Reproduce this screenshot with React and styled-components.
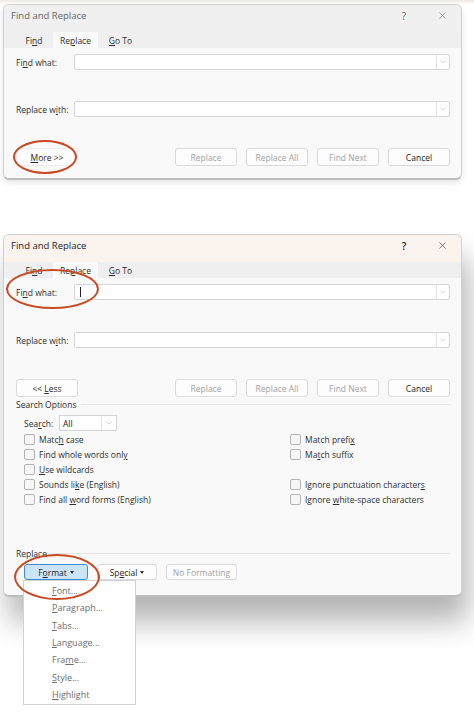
import React from "react";
import styled, { createGlobalStyle } from "styled-components";
import { ChevronDown, X } from "lucide-react";

const GlobalStyle = createGlobalStyle`
  html, body {
    margin: 0;
    padding: 0;
    background: #fff;
  }
  body {
    font-family: "Open Sans", "Noto Sans", sans-serif;
    color: #333;
  }
`;

const Page = styled.div`
  width: 474px;
  height: 721px;
  overflow: hidden;
  box-sizing: border-box;
  padding: 4px 0 0 3px;
  display: flex;
  flex-direction: column;
  gap: 54px;
  background: linear-gradient(#ebe7e3 0, #fff 4px);
`;

const Dialog = styled.div`
  position: relative;
  width: 459px;
  box-sizing: border-box;
  border: 1px solid #d0d0d0;
  border-bottom: 2px solid #bcbcbc;
  border-radius: 6px;
  background: #f9f9f9;
  display: flex;
  flex-direction: column;
  box-shadow: ${({ $active }) =>
    $active ? "6px 24px 30px rgba(0, 0, 0, 0.3)" : "0 3px 6px rgba(0, 0, 0, 0.1)"};
`;

const TitleBar = styled.div`
  height: 27px;
  display: flex;
  align-items: center;
  padding: 0 0 6px 7px;
  box-sizing: border-box;
  border-radius: 6px 6px 0 0;
  background: ${({ $active }) => ($active ? "#fbf3ee" : "#f0f0f0")};
  color: ${({ $active }) => ($active ? "#1e1e1e" : "#666")};
  font-size: 9.5px;
`;

const TitleText = styled.div`
  flex: 1;
`;

const TitleButton = styled.div`
  width: 38px;
  display: flex;
  justify-content: center;
  align-items: center;
  font-size: 10px;
  font-weight: ${({ $bold }) => ($bold ? 600 : 400)};
`;

const TabStrip = styled.div`
  height: 16px;
  display: flex;
  padding-left: 11px;
  background: #efefef;
`;

const Tab = styled.div`
  width: ${({ $w }) => $w}px;
  display: flex;
  align-items: center;
  justify-content: center;
  font-size: 8.5px;
  color: #2e2e2e;
  background: ${({ $selected }) => ($selected ? "#fafafa" : "transparent")};
`;

const Body = styled.div`
  display: flex;
  flex-direction: column;
  padding: 6px 11px ${({ $pb }) => $pb}px 12px;
`;

const Key = styled.span`
  text-decoration: underline;
  text-underline-offset: 1px;
`;

const FieldRow = styled.div`
  display: flex;
  align-items: center;
  height: 16px;
  margin-top: ${({ $mt }) => $mt || 0}px;
`;

const Label = styled.div`
  position: relative;
  width: ${({ $w }) => $w}px;
  flex-shrink: 0;
  font-size: 8.5px;
  color: #2e2e2e;
  white-space: nowrap;
`;

const Combo = styled.div`
  flex: 1;
  height: 100%;
  box-sizing: border-box;
  display: flex;
  align-items: center;
  background: #fff;
  border: 1px solid #d6d6d6;
  border-radius: 2px;
  padding-left: 5px;
`;

const Caret = styled.div`
  width: 1px;
  height: 10px;
  background: #222;
`;

const ComboArrow = styled.div`
  margin-left: auto;
  width: 13px;
  height: 100%;
  box-sizing: border-box;
  border-left: 1px solid #e4e4e4;
  display: flex;
  align-items: center;
  justify-content: center;
  color: #999;
`;

const ButtonRow = styled.div`
  display: flex;
  align-items: center;
  gap: ${({ $gap }) => $gap || 9}px;
  margin-top: ${({ $mt }) => $mt || 0}px;
`;

const Spacer = styled.div`
  flex: 1;
`;

const Button = styled.div`
  position: relative;
  width: ${({ $w }) => $w || 62}px;
  height: ${({ $h }) => $h || 18}px;
  box-sizing: border-box;
  display: flex;
  align-items: center;
  justify-content: center;
  gap: 3px;
  border-radius: 3px;
  font-size: 8.5px;
  white-space: nowrap;
  background: ${({ $primary }) => ($primary ? "#cce4f7" : "#fdfdfd")};
  border: 1px solid
    ${({ $primary, $faint }) => ($primary ? "#3f8ad4" : $faint ? "#ececec" : "#dadada")};
  color: ${({ $disabled }) => ($disabled ? "#a3a3a3" : "#262626")};
`;

const Triangle = styled.span`
  width: 0;
  height: 0;
  border-left: 2.5px solid transparent;
  border-right: 2.5px solid transparent;
  border-top: 3px solid #333;
`;

const GroupHeader = styled.div`
  display: flex;
  align-items: center;
  gap: 4px;
  height: 12px;
  margin-top: ${({ $mt }) => $mt || 0}px;
  font-size: 8.5px;
  color: #2e2e2e;
  &::after {
    content: "";
    flex: 1;
    height: 1px;
    background: #e6e6e6;
  }
`;

const SearchRow = styled.div`
  display: flex;
  align-items: center;
  height: 16px;
  margin-top: 5px;
  padding-left: 8px;
`;

const Select = styled.div`
  width: 58px;
  height: 100%;
  box-sizing: border-box;
  display: flex;
  align-items: center;
  background: #fff;
  border: 1px solid #d4d4d4;
  padding-left: 3px;
  font-size: 8.5px;
  color: #222;
`;

const SelectArrow = styled(ComboArrow)`
  width: 15px;
  color: #888;
`;

const OptionGrid = styled.div`
  display: grid;
  grid-template-columns: 266px 1fr;
  grid-auto-rows: 15px;
  margin-top: 1px;
  padding-left: 8px;
`;

const Option = styled.div`
  display: flex;
  align-items: center;
  gap: 4px;
  font-size: 8.5px;
  color: #2e2e2e;
  white-space: nowrap;
`;

const Box = styled.span`
  width: 11px;
  height: 11px;
  box-sizing: border-box;
  border: 1px solid #b4b4b4;
  border-radius: 2px;
  background: #f6f6f6;
`;

const FormatRow = styled(ButtonRow)`
  padding-left: 8px;
  margin-top: 5px;
`;

const Dropdown = styled.div`
  position: relative;
`;

const Menu = styled.div`
  position: absolute;
  top: 100%;
  left: -1px;
  width: 113px;
  box-sizing: border-box;
  padding: 1px 0;
  background: #fff;
  border: 1px solid #d2d2d2;
  z-index: 2;
`;

const MenuItem = styled.div`
  height: 17.3px;
  display: flex;
  align-items: center;
  padding-left: 28px;
  font-size: 9px;
  color: #6e6e6e;
`;

const Ring = styled.div`
  position: absolute;
  left: ${({ $x }) => $x}px;
  top: ${({ $y }) => $y}px;
  width: ${({ $w }) => $w}px;
  height: ${({ $h }) => $h}px;
  box-sizing: border-box;
  border: 2.5px solid #c84a22;
  border-radius: 50%;
  pointer-events: none;
  z-index: 3;
`;

const DialogTitle = ({ active }) => (
  <TitleBar $active={active}>
    <TitleText>Find and Replace</TitleText>
    <TitleButton $bold={active}>?</TitleButton>
    <TitleButton>
      <X size={11} strokeWidth={1.2} />
    </TitleButton>
  </TitleBar>
);

const Tabs = () => (
  <TabStrip>
    <Tab $w={38}>
      Fi<Key>n</Key>d
    </Tab>
    <Tab $w={45} $selected>
      Re<Key>p</Key>lace
    </Tab>
    <Tab $w={45}>
      <Key>G</Key>o To
    </Tab>
  </TabStrip>
);

const ComboBox = ({ caret }) => (
  <Combo>
    {caret && <Caret />}
    <ComboArrow>
      <ChevronDown size={8} strokeWidth={1.2} />
    </ComboArrow>
  </Combo>
);

const ActionButtons = () => (
  <>
    <Spacer />
    <Button $disabled>Replace</Button>
    <Button $disabled>Replace All</Button>
    <Button $disabled>Find Next</Button>
    <Button>Cancel</Button>
  </>
);

const leftOptions = [
  ["Matc", "h", " case"],
  ["Find whole words onl", "y", ""],
  ["", "U", "se wildcards"],
  ["Sounds li", "k", "e (English)"],
  ["Find all ", "w", "ord forms (English)"],
];

const rightOptions = [
  ["Match prefi", "x", ""],
  ["Ma", "t", "ch suffix"],
  null,
  ["Ignore punctuation character", "s", ""],
  ["Ignore ", "w", "hite-space characters"],
];

const menuItems = [
  ["", "F", "ont..."],
  ["", "P", "aragraph..."],
  ["", "T", "abs..."],
  ["", "L", "anguage..."],
  ["Fra", "m", "e..."],
  ["", "S", "tyle..."],
  ["", "H", "ighlight"],
];

const OptionItem = ({ parts }) => (
  <Option>
    <Box />
    <span>
      {parts[0]}
      <Key>{parts[1]}</Key>
      {parts[2]}
    </span>
  </Option>
);

const App = () => {
  return (
    <>
      <GlobalStyle />
      <Page>
        <Dialog>
          <DialogTitle />
          <Tabs />
          <Body $pb={12}>
            <FieldRow>
              <Label $w={58}>
                Fi<Key>n</Key>d what:
              </Label>
              <ComboBox />
            </FieldRow>
            <FieldRow $mt={31}>
              <Label $w={58}>
                Replace w<Key>i</Key>th:
              </Label>
              <ComboBox />
            </FieldRow>
            <ButtonRow $mt={31}>
              <Button $faint>
                <span>
                  <Key>M</Key>ore &gt;&gt;
                </span>
                <Ring $x={-4} $y={-9} $w={64} $h={34} />
              </Button>
              <ActionButtons />
            </ButtonRow>
          </Body>
        </Dialog>

        <Dialog $active>
          <DialogTitle active />
          <Tabs />
          <Body $pb={15}>
            <FieldRow>
              <Label $w={58}>
                Fi<Key>n</Key>d what:
                <Ring $x={-10} $y={-18} $w={93} $h={40} />
              </Label>
              <ComboBox caret />
            </FieldRow>
            <FieldRow $mt={32}>
              <Label $w={58}>
                Replace w<Key>i</Key>th:
              </Label>
              <ComboBox />
            </FieldRow>
            <ButtonRow $mt={31}>
              <Button>
                <span>
                  &lt;&lt; <Key>L</Key>ess
                </span>
              </Button>
              <ActionButtons />
            </ButtonRow>
            <GroupHeader $mt={1}>Search Options</GroupHeader>
            <SearchRow>
              <Label $w={35}>
                Sea<Key>r</Key>ch:
              </Label>
              <Select>
                All
                <SelectArrow>
                  <ChevronDown size={8} strokeWidth={1.2} />
                </SelectArrow>
              </Select>
            </SearchRow>
            <OptionGrid>
              {leftOptions.map((left, i) => (
                <React.Fragment key={i}>
                  <OptionItem parts={left} />
                  {rightOptions[i] ? <OptionItem parts={rightOptions[i]} /> : <div />}
                </React.Fragment>
              ))}
            </OptionGrid>
            <GroupHeader $mt={40}>Replace</GroupHeader>
            <FormatRow $gap={9}>
              <Dropdown>
                <Button $primary $w={64} $h={16}>
                  <span>
                    F<Key>o</Key>rmat
                  </span>
                  <Triangle />
                </Button>
                <Menu>
                  {menuItems.map((m, i) => (
                    <MenuItem key={i}>
                      {m[0]}
                      <Key>{m[1]}</Key>
                      {m[2]}
                    </MenuItem>
                  ))}
                </Menu>
                <Ring $x={-10} $y={-10} $w={86} $h={46} />
              </Dropdown>
              <Button $w={60} $h={16}>
                <span>
                  Sp<Key>e</Key>cial
                </span>
                <Triangle />
              </Button>
              <Button $w={71} $h={16} $disabled>
                No Formatting
              </Button>
            </FormatRow>
          </Body>
        </Dialog>
      </Page>
    </>
  );
};

export default App;
